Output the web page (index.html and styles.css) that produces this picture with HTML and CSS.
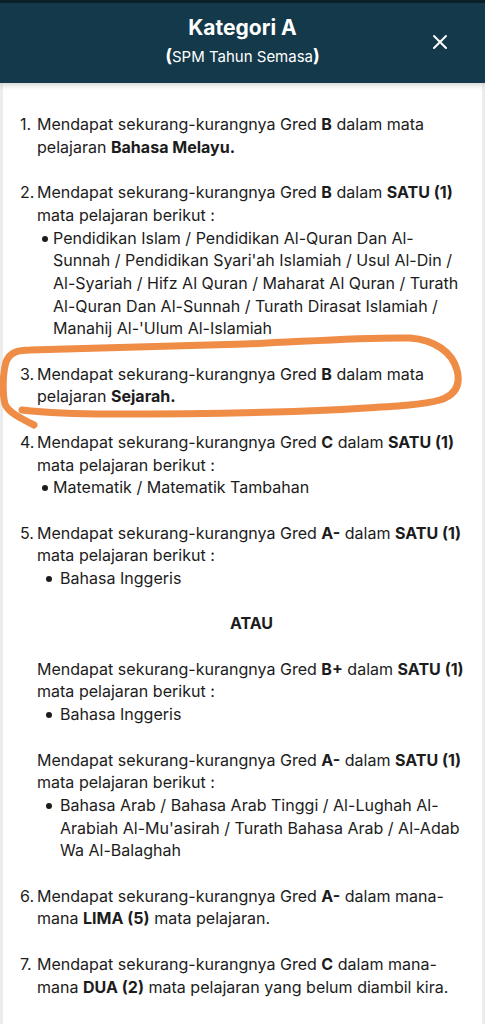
FILE: index.html
```html
<!DOCTYPE html>
<html lang="en">
<head>
    <meta charset="UTF-8">
    <meta name="viewport" content="width=device-width, initial-scale=1.0">
    <title>Kategori A</title>
    <link rel="stylesheet" href="styles.css">
</head>
<body>
    <div class="header">
        <div class="titles">
            <div class="title">Kategori A</div>
            <div class="subtitle"><span class="paren">(</span>SPM Tahun Semasa<span class="paren">)</span></div>
        </div>
        <button class="close" aria-label="Tutup">
            <svg width="16" height="16" viewBox="0 0 16 16">
                <path d="M2 2 L14 14 M14 2 L2 14" stroke="#ffffff" stroke-width="2" stroke-linecap="round"/>
            </svg>
        </button>
    </div>

    <div class="content">
        <div class="item">
            <span class="num">1.</span>
            <div class="text">Mendapat sekurang-kurangnya Gred <b>B</b> dalam mata pelajaran <b>Bahasa Melayu.</b></div>
        </div>

        <div class="item">
            <span class="num">2.</span>
            <div class="text">
                Mendapat sekurang-kurangnya Gred <b>B</b> dalam <b>SATU (1)</b> mata pelajaran berikut :
                <ul class="bullets">
                    <li>Pendidikan Islam / Pendidikan Al-Quran Dan Al-Sunnah / Pendidikan Syari'ah Islamiah / Usul Al-Din / Al-Syariah / Hifz Al Quran / Maharat Al Quran / Turath Al-Quran Dan Al-Sunnah / Turath Dirasat Islamiah / Manahij Al-'Ulum Al-Islamiah</li>
                </ul>
            </div>
        </div>

        <div class="item">
            <span class="num">3.</span>
            <div class="text">Mendapat sekurang-kurangnya Gred <b>B</b> dalam mata pelajaran <b>Sejarah.</b></div>
        </div>

        <div class="item">
            <span class="num">4.</span>
            <div class="text">
                Mendapat sekurang-kurangnya Gred <b>C</b> dalam <b>SATU (1)</b> mata pelajaran berikut :
                <ul class="bullets">
                    <li>Matematik / Matematik Tambahan</li>
                </ul>
            </div>
        </div>

        <div class="item">
            <span class="num">5.</span>
            <div class="text">
                Mendapat sekurang-kurangnya Gred <b>A-</b> dalam <b>SATU (1)</b> mata pelajaran berikut :
                <ul class="bullets wide">
                    <li>Bahasa Inggeris</li>
                </ul>

                <div class="or">ATAU</div>

                <div class="sub">
                    Mendapat sekurang-kurangnya Gred <b>B+</b> dalam <b>SATU (1)</b> mata pelajaran berikut :
                    <ul class="bullets wide">
                        <li>Bahasa Inggeris</li>
                    </ul>
                </div>

                <div class="sub">
                    Mendapat sekurang-kurangnya Gred <b>A-</b> dalam <b>SATU (1)</b> mata pelajaran berikut :
                    <ul class="bullets wide">
                        <li>Bahasa Arab / Bahasa Arab Tinggi / Al-Lughah Al-Arabiah Al-Mu'asirah / Turath Bahasa Arab / Al-Adab Wa Al-Balaghah</li>
                    </ul>
                </div>
            </div>
        </div>

        <div class="item">
            <span class="num">6.</span>
            <div class="text">Mendapat sekurang-kurangnya Gred <b>A-</b> dalam mana-mana <b>LIMA (5)</b> mata pelajaran.</div>
        </div>

        <div class="item">
            <span class="num">7.</span>
            <div class="text">Mendapat sekurang-kurangnya Gred <b>C</b> dalam mana-mana <b>DUA (2)</b> mata pelajaran yang belum diambil kira.</div>
        </div>

        <div class="item">
            <span class="num">8.</span>
            <div class="text">Berketurunan Melayu / Anak Negeri Sabah / Anak Negeri Sarawak / Orang Asli.</div>
        </div>
    </div>

    <!-- hand-drawn highlight around item 3 -->
    <svg class="scribble" width="485" height="1024" viewBox="0 0 485 1024">
        <path d="M34 425 C20 418 8 412 5 404 C2 392 3 372 6 362 C10 352 18 350 30 350 C90 349 170 346 245 344 C300 342 360 337 410 338 C435 340 452 352 457 370 C461 385 455 395 440 400 C420 406 380 407 330 410 C260 413 180 414 110 414 C70 414 40 412 22 410"
              fill="none" stroke="#ef8c46" stroke-width="7" stroke-linecap="round" stroke-linejoin="round"/>
    </svg>
</body>
</html>
```

FILE: styles.css
```css
* {
    margin: 0;
    padding: 0;
    box-sizing: border-box;
}

:root {
    --header: #14394a;
    --header-top: #0b1f29;
    --text: #1c1c1c;
    --edge: #ececec;
}

body {
    position: relative;
    width: 485px;
    height: 1024px;
    overflow: hidden;
    font-family: Inter, "Noto Sans", sans-serif;
    color: var(--text);
    background: #ffffff;
}

.header {
    height: 83px;
    background: var(--header);
    border-top: 3px solid var(--header-top);
    display: flex;
    align-items: center;
    justify-content: center;
    position: relative;
    color: #ffffff;
    box-shadow: 0 2px 6px rgba(0, 0, 0, 0.18);
    z-index: 1;
}

.titles {
    text-align: center;
    margin-top: -4px;
}

.title {
    font-size: 21px;
    font-weight: 700;
    line-height: 28px;
}

.subtitle {
    font-size: 15px;
    line-height: 24px;
    margin-top: 2px;
}

.paren {
    font-size: 18px;
    font-weight: 700;
}

.close {
    position: absolute;
    right: 36px;
    top: 30px;
    background: none;
    border: none;
    width: 18px;
    height: 18px;
    display: flex;
    align-items: center;
    justify-content: center;
}

.content {
    border-left: 3px solid var(--edge);
    border-right: 3px solid var(--edge);
    padding: 30px 16px 40px 17px;
    font-size: 16.05px;
    line-height: 22.7px;
}

.item {
    display: grid;
    grid-template-columns: 17px 1fr;
    margin-bottom: 22.7px;
}

.num {
    white-space: nowrap;
}

b {
    font-weight: 700;
}

.bullets {
    list-style: none;
}

.bullets li {
    position: relative;
    padding-left: 16px;
}

.bullets li::before {
    content: "";
    position: absolute;
    left: 5px;
    top: 9px;
    width: 6px;
    height: 6px;
    border-radius: 50%;
    background: var(--text);
}

.bullets.wide li {
    padding-left: 23px;
}

.bullets.wide li::before {
    left: 9px;
}

.or {
    text-align: center;
    font-weight: 700;
    margin: 22.7px 0;
}

.sub + .sub {
    margin-top: 22.7px;
}

.scribble {
    position: absolute;
    top: 0;
    left: 0;
    pointer-events: none;
    z-index: 2;
}
```
